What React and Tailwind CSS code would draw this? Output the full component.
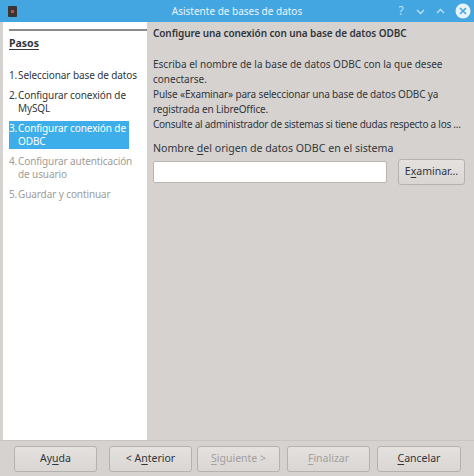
import React from "react";

const U = ({ children }) => <span className="underline underline-offset-2">{children}</span>;

function Btn({ children, disabled, className = "" }) {
  return (
    <div
      className={`h-[26px] flex items-center justify-center rounded-[3px] border border-[#b4b1ae] bg-gradient-to-b from-[#e4e1df] to-[#d9d6d4] text-[10.5px] ${disabled ? "text-[#a3a09e]" : "text-[#31363b]"} ${className}`}
    >
      {children}
    </div>
  );
}

function Step({ n, children, state, className = "w-fit" }) {
  const cls =
    state === "active"
      ? "bg-[#3daee9] text-white"
      : state === "disabled"
      ? "text-[#a09c99]"
      : "text-[#31363b]";
  return (
    <div className={`flex leading-[13px] py-[1px] pr-[2px] ${cls} ${className}`}>
      <span className="shrink-0 w-[9px]">{n}</span>
      <span>{children}</span>
    </div>
  );
}

export default function App() {
  return (
    <div
      className="w-[474px] h-[476px] flex flex-col bg-[#d6d2d0] overflow-hidden"
      style={{ fontFamily: '"Noto Sans", sans-serif' }}
    >
      {/* Title bar */}
      <div className="h-[22px] shrink-0 bg-[#44a6e0] flex items-center relative">
        <div className="ml-[8px] w-[9px] h-[11px] bg-[#3a3433] rounded-[1px] flex items-center justify-center">
          <div className="w-[3px] h-[3px] bg-[#c0504d]" />
        </div>
        <div className="absolute inset-0 flex items-center justify-center text-[10px] text-[#eaf4fb]">
          Asistente de bases de datos
        </div>
        <div className="ml-auto mr-[3px] flex items-center gap-[9px] relative">
          <span className="text-[12px] text-[#bfe1f6] w-[10px] text-center leading-none">?</span>
          <svg width="11" height="11" viewBox="0 0 11 11">
            <path d="M2 4 L5.5 7.5 L9 4" fill="none" stroke="#bfe1f6" strokeWidth="1.3" />
          </svg>
          <svg width="11" height="11" viewBox="0 0 11 11">
            <path d="M2 7 L5.5 3.5 L9 7" fill="none" stroke="#bfe1f6" strokeWidth="1.3" />
          </svg>
          <svg width="16" height="16" viewBox="0 0 16 16">
            <circle cx="8" cy="8" r="7.5" fill="#e8f4fb" />
            <path d="M5 5 L11 11 M11 5 L5 11" stroke="#44a6e0" strokeWidth="1.6" />
          </svg>
        </div>
      </div>

      {/* Body */}
      <div className="flex flex-1 min-h-0">
        {/* Left panel */}
        <div className="ml-[3px] w-[144px] h-[418px] bg-white shrink-0 flex flex-col pl-[6px]">
          <div className="mt-[7px] h-[2px] bg-[#8c8a88]" />
          <div className="mt-[5px] text-[10.5px] font-bold text-[#31363b] underline underline-offset-2 leading-[14px]">
            Pasos
          </div>
          <div className="mt-[18px] flex flex-col items-start gap-[5px] text-[10px] tracking-[-0.1px] mr-[4px]">
            <Step n="1.">Seleccionar base de datos</Step>
            <Step n="2.">Configurar conexión de MySQL</Step>
            <Step n="3." state="active" className="w-[120px]">Configurar conexión de ODBC</Step>
            <Step n="4." state="disabled">Configurar autenticación de usuario</Step>
            <Step n="5." state="disabled">Guardar y continuar</Step>
          </div>
        </div>

        {/* Right content */}
        <div className="flex-1 pl-[6px] pr-[9px] pt-[4px] text-[#31363b]">
          <div className="text-[10px] font-semibold tracking-[-0.1px] leading-[15px]">Configure una conexión con una base de datos ODBC</div>
          <div className="mt-[16px] text-[10px] leading-[15px]">
            <div>Escriba el nombre de la base de datos ODBC con la que desee conectarse.</div>
            <div className="tracking-[-0.15px]">Pulse «Examinar» para seleccionar una base de datos ODBC ya registrada en LibreOffice.</div>
            <div className="whitespace-nowrap tracking-[-0.25px]">Consulte al administrador de sistemas si tiene dudas respecto a los ...</div>
          </div>
          <div className="mt-[9px] text-[10.6px] leading-[15px]">
            Nombre <U>d</U>el origen de datos ODBC en el sistema
          </div>
          <div className="mt-[3px] flex items-center">
            <div className="w-[234px] h-[22px] bg-white border border-[#b8b5b2] rounded-[2px]" />
            <Btn className="ml-[11px] w-[67px] h-[23px]">
              E<U>x</U>aminar...
            </Btn>
          </div>
        </div>
      </div>

      {/* Bottom buttons */}
      <div className="h-[36px] shrink-0 border-t border-[#c9c5c3] flex items-center pl-[14px] gap-0">
        <Btn className="w-[83px]">
          Ay<U>u</U>da
        </Btn>
        <Btn className="w-[83px] ml-[12px]">
          &lt; A<U>n</U>terior
        </Btn>
        <Btn className="w-[83px] ml-[5px]" disabled>
          <U>S</U>iguiente &gt;
        </Btn>
        <Btn className="w-[83px] ml-[7px]" disabled>
          <U>F</U>inalizar
        </Btn>
        <Btn className="w-[84px] ml-[7px]">
          <U>C</U>ancelar
        </Btn>
      </div>
    </div>
  );
}
